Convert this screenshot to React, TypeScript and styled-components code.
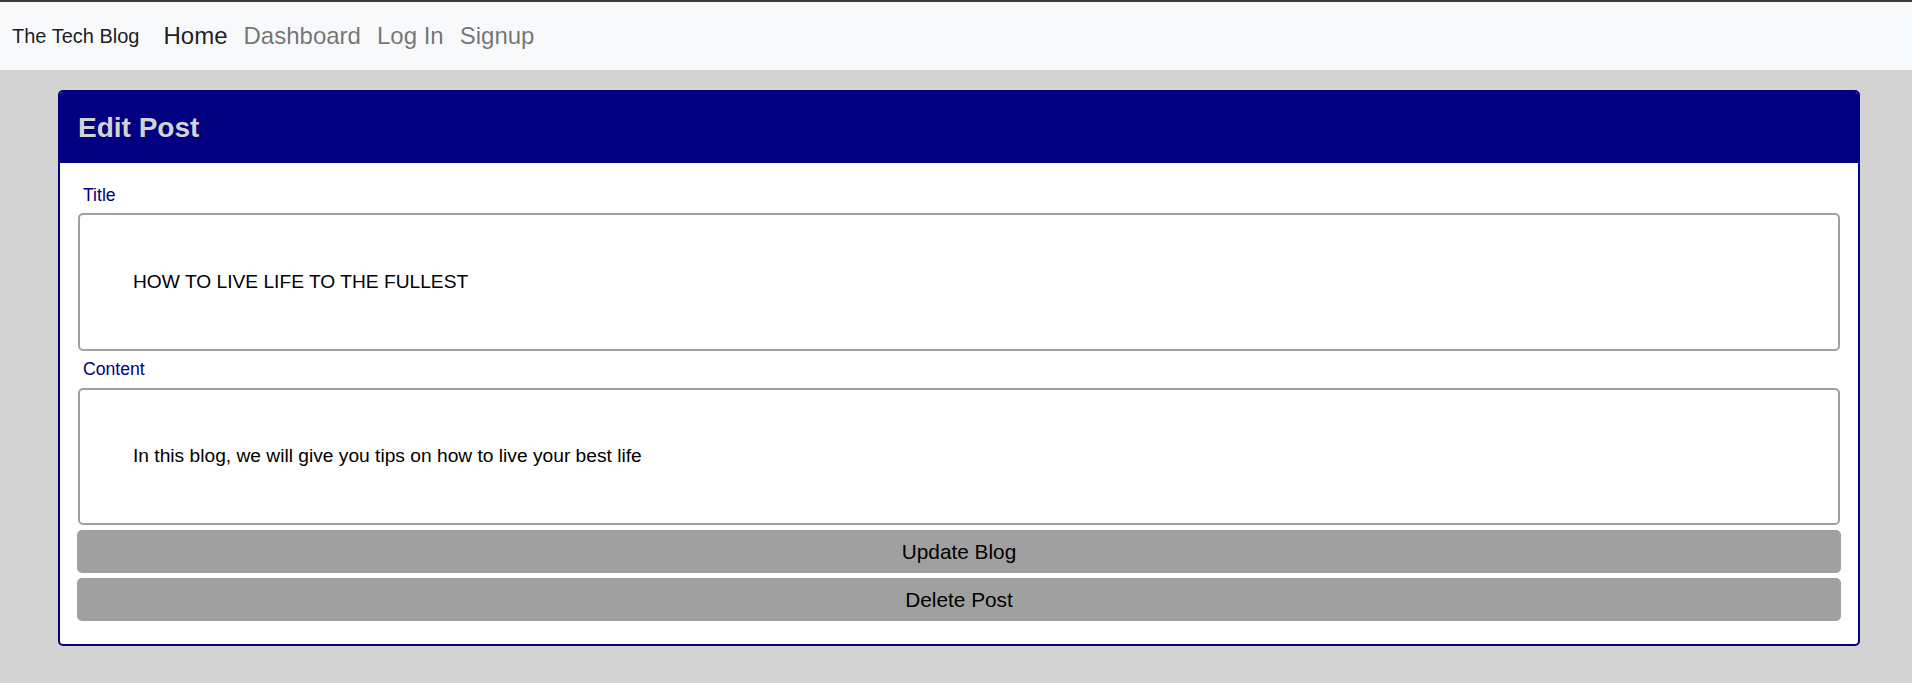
import React from "react";
import styled, { createGlobalStyle } from "styled-components";

const GlobalStyle = createGlobalStyle`
  * {
    box-sizing: border-box;
  }
  body {
    margin: 0;
    min-height: 100vh;
    background: #d3d3d3;
    font-family: "Liberation Sans", Arial, sans-serif;
  }
`;

const Navbar = styled.nav`
  display: flex;
  align-items: center;
  height: 70px;
  padding: 0 12px;
  background: #f8f9fa;
  border-top: 2px solid #3c3c3c;
`;

const Brand = styled.a`
  margin-right: 16px;
  font-size: 20px;
  line-height: 1.5;
  color: rgba(0, 0, 0, 0.9);
  text-decoration: none;
`;

const NavLink = styled.a<{ $active?: boolean }>`
  padding: 0 8px;
  font-size: 24px;
  line-height: 1.5;
  color: ${(props) => (props.$active ? "rgba(0, 0, 0, 0.9)" : "rgba(0, 0, 0, 0.55)")};
  text-decoration: none;
`;

const Card = styled.section`
  margin: 20px 52px 0 58px;
  background: #fff;
  border: 2px solid #000080;
  border-radius: 5px;
  overflow: hidden;
`;

const CardHeader = styled.header`
  display: flex;
  align-items: center;
  height: 71px;
  padding: 0 18px;
  background: #000080;
`;

const CardTitle = styled.h3`
  margin: 0;
  font-size: 28px;
  font-weight: 700;
  color: #d3d3d3;
`;

const Form = styled.form`
  padding: 14px 17px 23px;
`;

const Label = styled.label`
  display: block;
  margin: 5px 0;
  padding-left: 6px;
  font-size: 17.6px;
  line-height: 1.5;
  color: #000080;
`;

const Field = styled.input<{ $height: number }>`
  display: block;
  width: calc(100% - 2px);
  height: ${(props) => props.$height}px;
  margin: 0 1px;
  padding: 0 53px;
  font-family: "Liberation Sans", Arial, sans-serif;
  font-size: 19.2px;
  color: #000;
  background: #fff;
  border: 2px solid #a0a0a0;
  border-radius: 5px;
  outline: none;
`;

const Button = styled.button`
  display: block;
  width: 100%;
  margin-top: 5px;
  padding: 6px 12px;
  font-family: "Liberation Sans", Arial, sans-serif;
  font-size: 20.8px;
  line-height: 1.5;
  color: #000;
  background: #a0a0a0;
  border: none;
  border-radius: 5px;
`;

export default function App() {
  return (
    <>
      <GlobalStyle />
      <Navbar>
        <Brand href="#">The Tech Blog</Brand>
        <NavLink href="#" $active>
          Home
        </NavLink>
        <NavLink href="#">Dashboard</NavLink>
        <NavLink href="#">Log In</NavLink>
        <NavLink href="#">Signup</NavLink>
      </Navbar>

      <Card>
        <CardHeader>
          <CardTitle>Edit Post</CardTitle>
        </CardHeader>
        <Form onSubmit={(e) => e.preventDefault()}>
          <Label htmlFor="post-title">Title</Label>
          <Field
            id="post-title"
            $height={138}
            defaultValue="HOW TO LIVE LIFE TO THE FULLEST"
          />
          <Label htmlFor="post-content">Content</Label>
          <Field
            id="post-content"
            $height={137}
            defaultValue="In this blog, we will give you tips on how to live your best life"
          />
          <Button type="submit">Update Blog</Button>
          <Button type="button">Delete Post</Button>
        </Form>
      </Card>
    </>
  );
}
